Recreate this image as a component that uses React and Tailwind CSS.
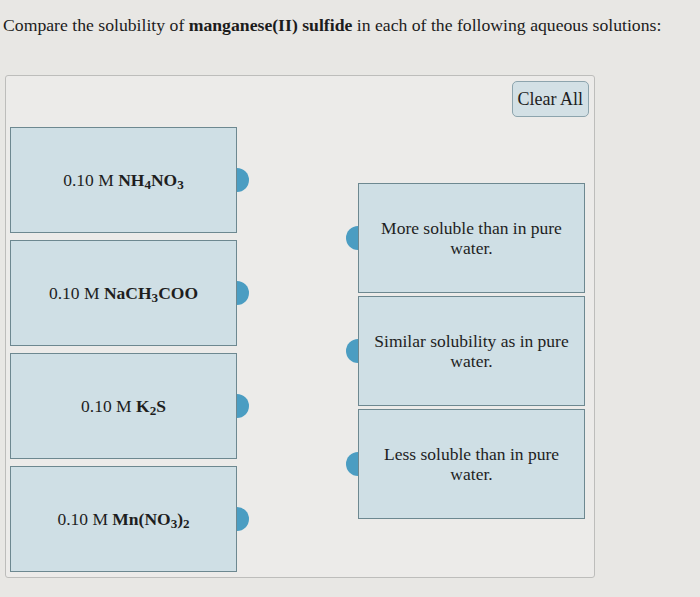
const serif = { fontFamily: '"Liberation Serif", "Times New Roman", serif' };

const LEFT = [
  <>0.10 M <b>NH<sub>4</sub>NO<sub>3</sub></b></>,
  <>0.10 M <b>NaCH<sub>3</sub>COO</b></>,
  <>0.10 M <b>K<sub>2</sub>S</b></>,
  <>0.10 M <b>Mn(NO<sub>3</sub>)<sub>2</sub></b></>,
];

const RIGHT = [
  'More soluble than in pure water.',
  'Similar solubility as in pure water.',
  'Less soluble than in pure water.',
];

function Tab({ side }) {
  // half-circle drag handle hanging off the card edge
  return side === 'right' ? (
    <div className="absolute top-1/2 -right-[13px] -translate-y-1/2 w-3 h-6 rounded-r-full bg-[#4b9dc2]" />
  ) : (
    <div className="absolute top-1/2 -left-[13px] -translate-y-1/2 w-3 h-6 rounded-l-full bg-[#4b9dc2]" />
  );
}

function Card({ children, side, tall }) {
  return (
    <div
      className={
        'relative w-[227px] flex items-center justify-center px-3 text-center text-[17.5px] leading-[20px] text-[#1e1e1e] bg-[#cfdfe5] border border-[#6d8890] ' +
        (tall ? 'h-[110px]' : 'h-[106px]')
      }
    >
      <span>{children}</span>
      <Tab side={side} />
    </div>
  );
}

export default function App() {
  return (
    <div className="w-[700px] h-[597px] bg-[#e8e7e4] overflow-hidden" style={serif}>
      <div className="pl-[3px] pt-[15px] text-[17.7px] leading-5 text-[#1c1c1c]">
        Compare the solubility of <b>manganese(II) sulfide</b> in each of the following aqueous solutions:
      </div>

      <div className="ml-[5px] mt-10 w-[590px] h-[503px] bg-[#ecebe9] border border-[#bdbdbb] rounded-[3px] pl-[4px] pr-[5px] pt-[5px]">
        <div className="flex justify-end">
          <button className="h-[36px] px-[5px] rounded-[5px] border border-[#8da4ad] bg-[#d3e0e5] text-[18px] text-[#1e1e1e]">
            Clear All
          </button>
        </div>

        <div className="flex justify-between mt-[10px] pr-[4px]">
          <div className="flex flex-col gap-[7px]">
            {LEFT.map((t, i) => (
              <Card key={i} side="right">{t}</Card>
            ))}
          </div>
          <div className="flex flex-col gap-[3px] mt-[56px]">
            {RIGHT.map((t, i) => (
              <Card key={i} side="left" tall>{t}</Card>
            ))}
          </div>
        </div>
      </div>
    </div>
  );
}
